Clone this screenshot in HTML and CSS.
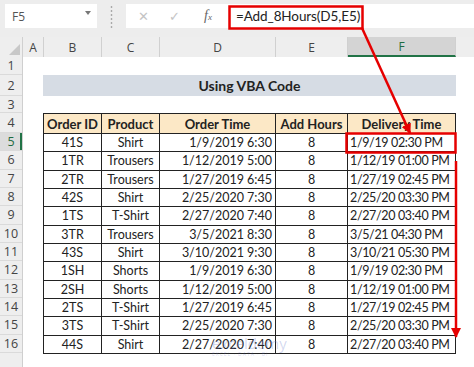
FILE: index.html
```html
<!DOCTYPE html>
<html>
<head>
  <meta charset="UTF-8">
  <meta name="viewport" content="width=device-width, initial-scale=1.0">
  <title>Using VBA Code</title>
  <link rel="stylesheet" href="styles.css">
</head>
<body>
  <div class="app">
    <div class="toolbar">
      <div class="namebox"><span>F5</span><span class="caret"></span></div>
      <div class="grip"></div>
      <div class="formula">
        <span class="ico cancel">&#x2715;</span>
        <span class="ico enter">&#x2713;</span>
        <span class="ico fx"><i>f</i><small>x</small></span>
        <div class="formula-text">=Add_8Hours(D5,E5)</div>
      </div>
    </div>

    <div class="colheads">
      <div class="corner"></div>
      <div class="ch col-a">A</div>
      <div class="ch col-b">B</div>
      <div class="ch col-c">C</div>
      <div class="ch col-d">D</div>
      <div class="ch col-e">E</div>
      <div class="ch col-f active">F</div>
      <div class="ch col-rest"></div>
    </div>

    <div class="body">
      <div class="rowheads">
        <div class="rh r1">1</div>
        <div class="rh r2">2</div>
        <div class="rh r3">3</div>
        <div class="rh r4">4</div>
        <div class="rh active">5</div>
        <div class="rh">6</div>
        <div class="rh">7</div>
        <div class="rh">8</div>
        <div class="rh">9</div>
        <div class="rh">10</div>
        <div class="rh">11</div>
        <div class="rh">12</div>
        <div class="rh">13</div>
        <div class="rh">14</div>
        <div class="rh">15</div>
        <div class="rh">16</div>
        <div class="rh last"></div>
      </div>

      <div class="cells">
        <div class="blank r1"></div>
        <div class="title">Using VBA Code</div>
        <div class="blank r3"></div>

        <div class="data" id="data"></div>
      </div>
    </div>

    <svg class="marks" width="474" height="367" viewBox="0 0 474 367">
      <defs>
        <marker id="head" viewBox="0 0 10 10" refX="9" refY="5" markerWidth="4" markerHeight="4" orient="auto">
          <path d="M0 0 L10 5 L0 10 z" fill="#e60000"/>
        </marker>
      </defs>
      <rect x="229.5" y="6.5" width="133" height="22" fill="none" stroke="#e60000" stroke-width="2.5"/>
      <line x1="362" y1="28" x2="410" y2="133" stroke="#e60000" stroke-width="2.5" marker-end="url(#head)"/>
      <rect x="346.5" y="133.5" width="109" height="19" fill="none" stroke="#e60000" stroke-width="2.5"/>
      <line x1="456" y1="161" x2="456" y2="337" stroke="#e60000" stroke-width="2.5" marker-end="url(#head)"/>
    </svg>

    <div class="watermark">exceldemy<small>EXCEL · DATA · BI</small></div>
  </div>

  <script>
    // Order rows: id, product, order time, delivery time
    const orders = [
      ['41S', 'Shirt', '1/9/2019 6:30', '1/9/19 02:30 PM'],
      ['1TR', 'Trousers', '1/12/2019 5:00', '1/12/19 01:00 PM'],
      ['2TR', 'Trousers', '1/27/2019 6:45', '1/27/19 02:45 PM'],
      ['42S', 'Shirt', '2/25/2020 7:30', '2/25/20 03:30 PM'],
      ['1TS', 'T-Shirt', '2/27/2020 7:40', '2/27/20 03:40 PM'],
      ['3TR', 'Trousers', '3/5/2021 8:30', '3/5/21 04:30 PM'],
      ['43S', 'Shirt', '3/10/2021 9:30', '3/10/21 05:30 PM'],
      ['1SH', 'Shorts', '1/9/2019 6:30', '1/9/19 02:30 PM'],
      ['2SH', 'Shorts', '1/12/2019 5:00', '1/12/19 01:00 PM'],
      ['2TS', 'T-Shirt', '1/27/2019 6:45', '1/27/19 02:45 PM'],
      ['3TS', 'T-Shirt', '2/25/2020 7:30', '2/25/20 03:30 PM'],
      ['44S', 'Shirt', '2/27/2020 7:40', '2/27/20 03:40 PM']
    ];

    let html = `
      <div class="cell head">Order ID</div>
      <div class="cell head">Product</div>
      <div class="cell head">Order Time</div>
      <div class="cell head">Add Hours</div>
      <div class="cell head">Delivery Time</div>`;
    orders.forEach(o => {
      html += `
      <div class="cell center">${o[0]}</div>
      <div class="cell center">${o[1]}</div>
      <div class="cell right">${o[2]}</div>
      <div class="cell center">8</div>
      <div class="cell left">${o[3]}</div>`;
    });
    document.getElementById('data').innerHTML = html;
  </script>
</body>
</html>
```

FILE: styles.css
```css
* {
  box-sizing: border-box;
}
body {
  margin: 0;
  background: #fff;
  font-family: Lato, "Open Sans", sans-serif;
  color: #222;
}
.app {
  position: relative;
  width: 474px;
  height: 367px;
  overflow: hidden;
}

/* formula bar */
.toolbar {
  display: flex;
  align-items: stretch;
  height: 37px;
  padding: 4px 0 9px 5px;
  background: #ededed;
}
.namebox {
  width: 92px;
  background: #fff;
  display: flex;
  align-items: center;
  justify-content: space-between;
  padding: 0 6px 0 7px;
  font-family: "Open Sans", sans-serif;
  font-size: 12px;
  color: #555;
}
.caret {
  width: 0;
  height: 0;
  border-left: 3.5px solid transparent;
  border-right: 3.5px solid transparent;
  border-top: 4px solid #777;
  margin-top: -6px;
}
.grip {
  width: 29px;
  background: radial-gradient(circle, #aaa 0.8px, transparent 1.2px) center 9px / 3px 4px repeat-y;
}
.formula {
  flex: 1;
  background: #fff;
  display: flex;
  align-items: center;
}
.ico {
  width: 31px;
  text-align: center;
  color: #c4c4c4;
  font-family: "DejaVu Sans", sans-serif;
  font-size: 13px;
}
.ico.cancel {
  margin-left: 2px;
}
.ico.fx {
  width: 36px;
  color: #666;
  font-family: "Liberation Serif", serif;
  font-size: 14px;
}
.ico.fx small {
  font-size: 9px;
  font-style: italic;
}
.formula-text {
  margin-left: 10px;
  font-size: 13.5px;
  color: #222;
  letter-spacing: -0.1px;
}

/* column headers */
.colheads {
  display: flex;
  height: 20px;
  background: #eeeeee;
  font-family: "Open Sans", sans-serif;
  font-size: 12px;
  color: #444;
}
.corner {
  width: 23px;
  border-right: 1px solid #d0d0d0;
  position: relative;
}
.corner::after {
  content: "";
  position: absolute;
  right: 2px;
  bottom: 2px;
  border-left: 11px solid transparent;
  border-bottom: 11px solid #c8c8c8;
}
.ch {
  display: flex;
  align-items: center;
  justify-content: center;
  border-right: 1px solid #d0d0d0;
}
.col-a { width: 21px; }
.col-b { width: 58px; }
.col-c { width: 58px; }
.col-d { width: 116px; }
.col-e { width: 72px; }
.col-f { width: 108px; }
.col-rest { flex: 1; border-right: none; }
.ch.active {
  background: #d4d4d4;
  border-bottom: 2px solid #217346;
  color: #1e6b41;
}

/* sheet body */
.body {
  display: flex;
}
.rowheads {
  width: 23px;
  background: #eeeeee;
  border-right: 1px solid #cfcfcf;
  font-family: "Open Sans", sans-serif;
  font-size: 12.5px;
  color: #444;
}
.rh {
  height: 18.33px;
  display: flex;
  align-items: center;
  justify-content: center;
  border-bottom: 1px solid #dadada;
}
.rh.r1 { height: 18px; }
.rh.r2 { height: 21px; }
.rh.r3 { height: 17px; }
.rh.r4 { height: 20px; }
.rh.last { height: 20px; border-bottom: none; }
.rh.active {
  background: #dcdcdc;
  color: #1e6b41;
  box-shadow: inset -2px 0 0 #217346;
}

.cells {
  flex: 1;
  padding-left: 20px;
}
.blank.r1 { height: 18px; }
.blank.r3 { height: 17px; }
.title {
  width: 413px;
  height: 21px;
  background: #d6dce4;
  display: flex;
  align-items: center;
  justify-content: center;
  font-weight: bold;
  font-size: 14px;
  color: #222;
}

.data {
  display: grid;
  grid-template-columns: 58px 58px 116px 72px 108px;
  grid-template-rows: 20px repeat(12, 18.33px);
  width: 413px;
  border-top: 1px solid #222;
  border-left: 1px solid #222;
  font-size: 12.5px;
}
.cell {
  display: flex;
  align-items: center;
  border-right: 1px solid #222;
  border-bottom: 1px solid #222;
  padding: 0 3px;
  white-space: nowrap;
}
.cell.head {
  background: #fce8c6;
  justify-content: center;
  font-weight: bold;
  font-size: 13px;
  padding: 0;
}
.cell.center { justify-content: center; }
.cell.right { justify-content: flex-end; }
.cell.left {
  justify-content: flex-start;
  padding-left: 2px;
  letter-spacing: -0.35px;
}

/* annotations */
.marks {
  position: absolute;
  top: 0;
  left: 0;
  pointer-events: none;
}
.watermark {
  position: absolute;
  left: 212px;
  top: 336px;
  font-size: 15px;
  line-height: 15px;
  color: rgba(95, 115, 200, 0.28);
  font-family: "Open Sans", sans-serif;
}
.watermark small {
  display: block;
  font-size: 5px;
  line-height: 6px;
  letter-spacing: 1px;
}
```
